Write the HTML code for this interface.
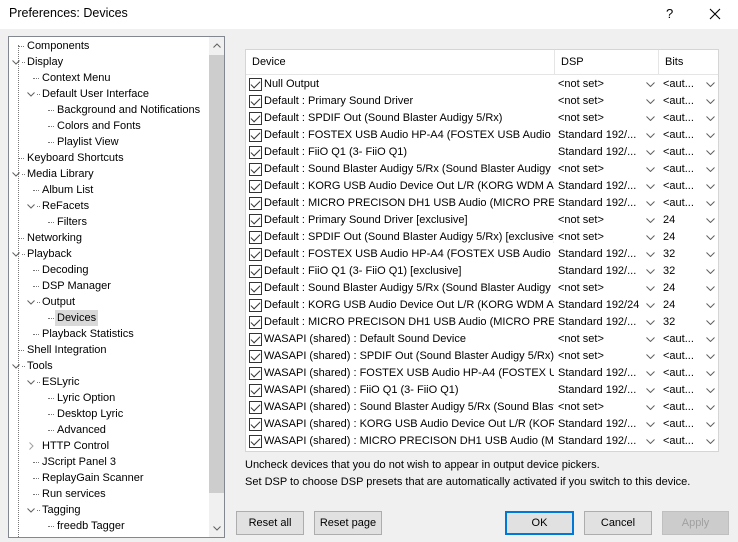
<!DOCTYPE html>
<html><head><style>
*{margin:0;padding:0;box-sizing:border-box}
body{width:738px;height:542px;background:#f0f0f0;font-family:"Liberation Sans",sans-serif;font-size:11px;color:#000;position:relative;overflow:hidden}
.title{position:absolute;left:0;top:0;width:738px;height:29px;background:#fff}
.title .t{position:absolute;left:9px;top:6px;font-size:12.5px}
.abs{position:absolute;white-space:nowrap}
.tree{position:absolute;left:8px;top:36px;width:217px;height:502px;background:#fff;border:1px solid #828790;overflow:hidden}
.sb{position:absolute;left:200px;top:0;width:16px;height:502px;background:#f0f0f0}
.thumb{position:absolute;left:0;top:18px;width:16px;height:438px;background:#cdcdcd}
.ti{position:absolute;height:16px;line-height:16px;white-space:nowrap}
.sel{background:#d9d9d9;padding:0 2px;margin-left:-2px}
.dot{position:absolute;border-top:1px dotted #777;width:6px;top:8px}
.vl{position:absolute;border-left:1px dotted #777;width:0}
.exp{position:absolute}
.tbl{position:absolute;left:245px;top:49px;width:474px;height:403px;background:#fff;border:1px solid #d5d5d5;overflow:hidden}
.hd{position:absolute;top:0;height:25px;line-height:24px;border-right:1px solid #e5e5e5;border-bottom:1px solid #e5e5e5;padding-left:6px}
.row{position:absolute;left:0;width:474px;height:17px;line-height:17px}
.c1{position:absolute;left:18px;width:290px;overflow:hidden;white-space:nowrap}
.cb{position:absolute;left:3px;top:2px;width:13px;height:13px;border:1px solid #333;background:#fff}
.cb:after{content:"";position:absolute;left:3px;top:0px;width:4px;height:8px;border:solid #333;border-width:0 1.3px 1.3px 0;transform:rotate(45deg)}
.c2{position:absolute;left:312px;width:82px;overflow:hidden;white-space:nowrap}
.c3{position:absolute;left:417px;width:40px;overflow:hidden;white-space:nowrap}
.ar{position:absolute;top:6px}
.btn{position:absolute;top:511px;height:24px;border:1px solid #adadad;background:#e1e1e1;text-align:center;line-height:22px}
</style></head><body>
<div class="title"><span class="t">Preferences: Devices</span>
<span class="abs" style="left:666px;top:6px;font-size:13px">?</span>
<svg class="abs" style="left:709px;top:8px" width="12" height="12"><path d="M1 1L11 11M11 1L1 11" stroke="#000" stroke-width="1.1"/></svg></div>

<div class="tree" id="tree">
<div class="sb"><div class="thumb"></div>
<svg class="abs" style="left:4px;top:6px" width="8" height="5"><path d="M0.5 4.5L4 1L7.5 4.5" stroke="#606060" fill="none"/></svg>
<svg class="abs" style="left:4px;top:489px" width="8" height="5"><path d="M0.5 0.5L4 4L7.5 0.5" stroke="#606060" fill="none"/></svg></div>
</div>

<div class="tbl" id="tbl">
<div class="hd" style="left:0;width:309px">Device</div>
<div class="hd" style="left:309px;width:104px">DSP</div>
<div class="hd" style="left:413px;width:61px;border-right:none">Bits</div>
</div>

<div class="abs" style="left:245px;top:459px">Uncheck devices that you do not wish to appear in output device pickers.</div>
<div class="abs" style="left:245px;top:476px">Set DSP to choose DSP presets that are automatically activated if you switch to this device.</div>

<div class="btn" style="left:236px;width:68px">Reset all</div>
<div class="btn" style="left:314px;width:68px">Reset page</div>
<div class="btn" style="left:505px;width:69px;border:2px solid #0078d7;line-height:20px">OK</div>
<div class="btn" style="left:584px;width:68px">Cancel</div>
<div class="btn" style="left:662px;width:67px;color:#a0a0a0;border-color:#bfbfbf;background:#ccc">Apply</div>

<script>
var items=[["Components",0,0],["Display",0,1],["Context Menu",1,0],["Default User Interface",1,1],["Background and Notifications",2,0],["Colors and Fonts",2,0],["Playlist View",2,0],["Keyboard Shortcuts",0,0],["Media Library",0,1],["Album List",1,0],["ReFacets",1,1],["Filters",2,0],["Networking",0,0],["Playback",0,1],["Decoding",1,0],["DSP Manager",1,0],["Output",1,1],["Devices",2,0],["Playback Statistics",1,0],["Shell Integration",0,0],["Tools",0,1],["ESLyric",1,1],["Lyric Option",2,0],["Desktop Lyric",2,0],["Advanced",2,0],["HTTP Control",1,2],["JScript Panel 3",1,0],["ReplayGain Scanner",1,0],["Run services",1,0],["Tagging",1,1],["freedb Tagger",2,0]];
var t=document.getElementById('tree'),h='';
h+='<div class="vl" style="left:9px;top:8px;height:500px"></div>';
items.forEach(function(it,i){var y=1+i*16,x=18+it[1]*15;
 var cls=it[0]=="Devices"?' sel':'';
 if(it[2]==1)h+='<svg class="exp" style="left:'+(x-15)+'px;top:'+(y+6)+'px" width="8" height="5"><path d="M0.5 0.5L4 4L7.5 0.5" stroke="#606060" fill="none"/></svg><div class="dot" style="left:'+(x-5)+'px;top:'+(y+8)+'px;width:3px"></div>';
 else if(it[2]==2)h+='<svg class="exp" style="left:'+(x-13)+'px;top:'+(y+4)+'px" width="5" height="8"><path d="M0.5 0.5L4 4L0.5 7.5" stroke="#a0a0a0" fill="none"/></svg>';
 else h+='<div class="dot" style="left:'+(x-9)+'px;top:'+(y+8)+'px"></div>';
 h+='<div class="ti'+cls+'" style="left:'+x+'px;top:'+y+'px">'+it[0]+'</div>';});
t.insertAdjacentHTML('beforeend',h);
var rows=[["Null Output","<not set>","<aut..."],["Default : Primary Sound Driver","<not set>","<aut..."],["Default : SPDIF Out (Sound Blaster Audigy 5/Rx)","<not set>","<aut..."],["Default : FOSTEX USB Audio HP-A4 (FOSTEX USB Audio HP-A4)","Standard 192/...","<aut..."],["Default : FiiO Q1 (3- FiiO Q1)","Standard 192/...","<aut..."],["Default : Sound Blaster Audigy 5/Rx (Sound Blaster Audigy 5/Rx)","<not set>","<aut..."],["Default : KORG USB Audio Device Out L/R (KORG WDM Audio)","Standard 192/...","<aut..."],["Default : MICRO PRECISON DH1 USB Audio (MICRO PRECISON)","Standard 192/...","<aut..."],["Default : Primary Sound Driver [exclusive]","<not set>","24"],["Default : SPDIF Out (Sound Blaster Audigy 5/Rx) [exclusive]","<not set>","24"],["Default : FOSTEX USB Audio HP-A4 (FOSTEX USB Audio HP-A4)","Standard 192/...","32"],["Default : FiiO Q1 (3- FiiO Q1) [exclusive]","Standard 192/...","32"],["Default : Sound Blaster Audigy 5/Rx (Sound Blaster Audigy 5/Rx)","<not set>","24"],["Default : KORG USB Audio Device Out L/R (KORG WDM Audio)","Standard 192/24","24"],["Default : MICRO PRECISON DH1 USB Audio (MICRO PRECISON)","Standard 192/...","32"],["WASAPI (shared) : Default Sound Device","<not set>","<aut..."],["WASAPI (shared) : SPDIF Out (Sound Blaster Audigy 5/Rx)","<not set>","<aut..."],["WASAPI (shared) : FOSTEX USB Audio HP-A4 (FOSTEX USB Audio)","Standard 192/...","<aut..."],["WASAPI (shared) : FiiO Q1 (3- FiiO Q1)","Standard 192/...","<aut..."],["WASAPI (shared) : Sound Blaster Audigy 5/Rx (Sound Blaster)","<not set>","<aut..."],["WASAPI (shared) : KORG USB Audio Device Out L/R (KORG WDM)","Standard 192/...","<aut..."],["WASAPI (shared) : MICRO PRECISON DH1 USB Audio (MICRO PRE)","Standard 192/...","<aut..."]];
function e(s){return s.replace(/</g,'&lt;').replace(/>/g,'&gt;')}
var chev='<svg width="9" height="5"><path d="M0.5 0.5L4.5 4.5L8.5 0.5" stroke="#606060" fill="none"/></svg>';
var tb=document.getElementById('tbl'),r='';
rows.forEach(function(x,i){var y=26+i*17;
r+='<div class="row" style="top:'+y+'px"><div class="cb"></div><div class="c1">'+e(x[0])+'</div><div class="c2">'+e(x[1])+'</div><span class="ar" style="left:400px;line-height:0">'+chev+'</span><div class="c3">'+e(x[2])+'</div><span class="ar" style="left:460px;line-height:0">'+chev+'</span></div>';});
tb.insertAdjacentHTML('beforeend',r);
</script>
</body></html>
